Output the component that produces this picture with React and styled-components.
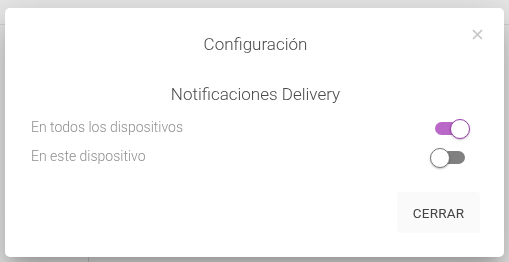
import React, { useState } from "react";
import styled, { createGlobalStyle } from "styled-components";

const Global = createGlobalStyle`
  html, body { margin: 0; padding: 0; }
  body { font-family: Roboto, "Noto Sans", sans-serif; background: #e6e6e6; overflow: hidden; }
`;

const Page = styled.div`
  width: 509px;
  height: 262px;
  display: flex;
  flex-direction: column;
  background: #e6e6e6;
`;
const Header = styled.div`
  height: 24px;
  border-bottom: 1px solid #d2d2d2;
  background: #e8e8e8;
`;
const Body = styled.div`
  flex: 1;
  display: flex;
`;
const Side = styled.div`
  width: 88px;
  border-right: 1px solid #c8c8c8;
`;

const Backdrop = styled.div`
  position: fixed;
  inset: 0;
  display: flex;
  align-items: flex-start;
  justify-content: center;
  padding-top: 8px;
`;

const Dialog = styled.div`
  position: relative;
  width: 499px;
  height: 249px;
  box-sizing: border-box;
  background: #fff;
  border-radius: 5px;
  box-shadow: 0 11px 15px -7px rgba(0,0,0,.2), 0 24px 38px 3px rgba(0,0,0,.14), 0 9px 46px 8px rgba(0,0,0,.12);
  padding: 26px 24px 0 26px;
  display: flex;
  flex-direction: column;
`;

const Close = styled.button`
  position: absolute;
  top: 19px;
  right: 20px;
  width: 14px;
  height: 14px;
  padding: 0;
  border: 0;
  background: none;
  display: flex;
  align-items: center;
  justify-content: center;
`;

const Title = styled.h2`
  margin: 0;
  font-size: 17px;
  font-weight: 300;
  color: #4a4a4a;
  text-align: center;
  line-height: 20px;
`;

const Section = styled.h3`
  margin: 30px 0 0;
  font-size: 17px;
  font-weight: 300;
  color: #4a4a4a;
  text-align: center;
  line-height: 20px;
`;

const Rows = styled.div`
  margin-top: 13px;
  display: flex;
  flex-direction: column;
  gap: 9px;
`;

const Row = styled.div`
  display: flex;
  align-items: center;
  justify-content: space-between;
  height: 20px;
  padding-right: 15px;
`;

const Label = styled.span`
  font-size: 14px;
  font-weight: 300;
  color: #8f8f8f;
`;

const Track = styled.button`
  position: relative;
  width: 30px;
  height: 13px;
  margin-top: 3px;
  border: 0;
  padding: 0;
  border-radius: 7px;
  background: ${p => (p.$on ? "#ba68c8" : "#808080")};
  cursor: pointer;
`;

const Thumb = styled.span`
  position: absolute;
  top: 50%;
  left: ${p => (p.$on ? "15px" : "-5px")};
  width: 18px;
  height: 18px;
  margin-top: -10px;
  border-radius: 50%;
  background: #fff;
  border: 1px solid ${p => (p.$on ? "#9c3fae" : "#777")};
  box-shadow: 0 1px 2px rgba(0,0,0,.25);
`;

const Footer = styled.div`
  margin-top: 26px;
  display: flex;
  justify-content: flex-end;
`;

const Button = styled.button`
  width: 83px;
  height: 41px;
  border: 0;
  border-radius: 4px;
  background: #fafafa;
  color: #444;
  font-family: Roboto, sans-serif;
  font-size: 13.5px;
  letter-spacing: 0.2px;
  text-transform: uppercase;
`;

function Toggle({ on, onClick }) {
  return (
    <Track $on={on} onClick={onClick}>
      <Thumb $on={on} />
    </Track>
  );
}

export default function App() {
  const [a, setA] = useState(true);
  const [b, setB] = useState(false);
  return (
    <>
      <Global />
      <Page>
        <Header />
        <Body>
          <Side />
        </Body>
      </Page>
      <Backdrop>
        <Dialog>
          <Close aria-label="close">
            <svg width="11" height="11" viewBox="0 0 11 11">
              <path d="M1 1L10 10M10 1L1 10" stroke="#c4c4c4" strokeWidth="1.6" />
            </svg>
          </Close>
          <Title>Configuración</Title>
          <Section>Notificaciones Delivery</Section>
          <Rows>
            <Row>
              <Label>En todos los dispositivos</Label>
              <Toggle on={a} onClick={() => setA(!a)} />
            </Row>
            <Row>
              <Label>En este dispositivo</Label>
              <Toggle on={b} onClick={() => setB(!b)} />
            </Row>
          </Rows>
          <Footer>
            <Button>Cerrar</Button>
          </Footer>
        </Dialog>
      </Backdrop>
    </>
  );
}
